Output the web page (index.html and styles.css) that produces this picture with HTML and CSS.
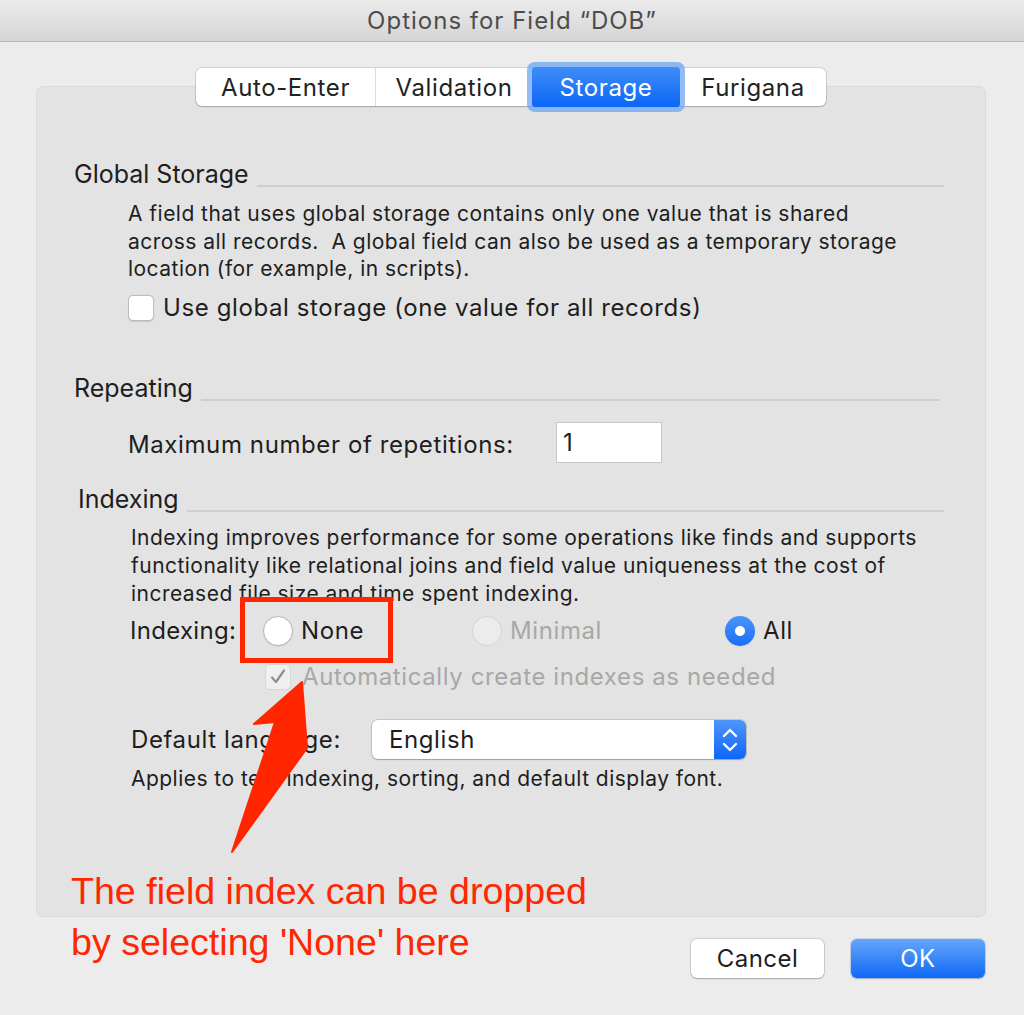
FILE: index.html
```html
<!DOCTYPE html>
<html lang="en">
<head>
<meta charset="utf-8">
<title>Options for Field “DOB”</title>
<link rel="stylesheet" href="styles.css">
</head>
<body>
<div class="window">
  <header class="titlebar">Options for Field “DOB”</header>
  <main class="content">
    <nav class="tabs">
      <span class="tab t1">Auto-Enter</span>
      <span class="tab t2">Validation</span>
      <span class="tab t3 active">Storage</span>
      <span class="tab t4">Furigana</span>
    </nav>
    <section class="panel">
      <div class="group">
        <div class="heading"><span class="htext">Global Storage</span><i class="rule"></i></div>
        <p class="desc">A field that uses global storage contains only one value that is shared<br>across all records.&nbsp; A global field can also be used as a temporary storage<br>location (for example, in scripts).</p>
        <div class="checkrow"><span class="box"></span><span class="label">Use global storage (one value for all records)</span></div>
      </div>
      <div class="group repeating">
        <div class="heading"><span class="htext">Repeating</span><i class="rule short"></i></div>
        <div class="maxrow"><span class="label maxlabel">Maximum number of repetitions:</span><span class="field">1</span></div>
      </div>
      <div class="group indexing">
        <div class="heading idxhead"><span class="htext">Indexing</span><i class="rule"></i></div>
        <p class="desc">Indexing improves performance for some operations like finds and supports<br>functionality like relational joins and field value uniqueness at the cost of<br>increased file size and time spent indexing.</p>
        <div class="radiorow">
          <span class="label idxlabel">Indexing:</span>
          <span class="radio-item r-none"><span class="radio"></span><span class="label">None</span></span>
          <span class="radio-item r-min disabled"><span class="radio"></span><span class="label">Minimal</span></span>
          <span class="radio-item r-all"><span class="radio on"></span><span class="label">All</span></span>
        </div>
        <div class="autorow">
          <span class="box dis"><svg viewBox="0 0 26 26" width="26" height="26"><path d="M7 13.5 L11 18 L19 6.5" fill="none" stroke="#8e8e8e" stroke-width="2.2" stroke-linecap="round" stroke-linejoin="round"/></svg></span>
          <span class="label gray">Automatically create indexes as needed</span>
        </div>
        <div class="langrow">
          <span class="label langlabel">Default language:</span>
          <span class="popup">
            <span class="pvalue">English</span>
            <span class="stepper"><svg viewBox="0 0 32 39" width="32" height="39"><path d="M10 16 L16 10 L22 16" fill="none" stroke="#fff" stroke-width="2.4" stroke-linecap="round" stroke-linejoin="round"/><path d="M10 24 L16 30 L22 24" fill="none" stroke="#fff" stroke-width="2.4" stroke-linecap="round" stroke-linejoin="round"/></svg></span>
          </span>
        </div>
        <p class="desc applies">Applies to text indexing, sorting, and default display font.</p>
      </div>
    </section>
    <footer class="buttons">
      <span class="btn cancel">Cancel</span>
      <span class="btn ok">OK</span>
    </footer>
  </main>
  <div class="callout-box"></div>
  <svg class="callout-arrow" viewBox="0 0 1024 1015" width="1024" height="1015">
    <path d="M302 682 L254 724 L275 722 L232 852 L307 748 Z" fill="#ff2600" stroke="#ff2600" stroke-width="2" stroke-linejoin="round"/>
  </svg>
  <p class="callout-text">The field index can be dropped<br>by selecting 'None' here</p>
</div>
</body>
</html>
```
FILE: styles.css
```css
* { box-sizing: border-box; }
html, body { margin: 0; padding: 0; }
body {
  width: 1024px;
  height: 1015px;
  overflow: hidden;
  background: #ececec;
  font-family: Inter, "Noto Sans", sans-serif;
  color: #222;
}
.window { position: relative; height: 1015px; display: flex; flex-direction: column; }
.titlebar {
  flex: none;
  height: 42px;
  background: linear-gradient(#ebebeb, #d5d5d5);
  border-bottom: 1px solid #b8b8b8;
  display: flex; align-items: center; justify-content: center;
  font-size: 24px; letter-spacing: 1px; color: #4d4d4d;
}
.content { padding: 26px 38px 0 36px; display: flex; flex-direction: column; }

.tabs {
  position: relative; z-index: 1;
  align-self: center;
  display: flex;
  width: 630px; height: 38px;
  background: #fff;
  border-radius: 6px;
  box-shadow: 0 0 0 1px rgba(0,0,0,0.11), 0 1px 1.5px rgba(0,0,0,0.18);
}
.tab {
  display: flex; align-items: center; justify-content: center;
  font-size: 24px; letter-spacing: 0.6px; color: #222;
}
.tab + .tab { border-left: 1px solid #dcdcdc; }
.t1 { width: 179px; }
.t2 { width: 157px; }
.t3 { width: 148px; }
.t4 { width: 146px; }
.tab.active {
  color: #fff;
  border-left: none;
  background: linear-gradient(#3f8dfa, #0c66f6);
  border-radius: 3px;
  margin: -1px 0;
  box-shadow: 0 0 0 5px rgba(110,165,245,0.75);
}
.tab.active + .tab { border-left: none; }

.panel {
  margin-top: -20px;
  height: 831px;
  background: #e3e3e3;
  border: 1px solid #d9d9d9;
  border-radius: 7px;
  padding: 72px 41px 0 37px;
}
.heading { display: flex; height: 30px; font-size: 25px; line-height: 30px; color: #1e1e1e; }
.rule { flex: 1; height: 2px; background: #cecece; margin: 26px 0 0 8px; }
.rule.short { margin-right: 4px; }
.desc { margin: 11px 0 0 54px; font-size: 21px; letter-spacing: 0.47px; line-height: 27.7px; color: #1e1e1e; }
.label { font-size: 24px; letter-spacing: 0.6px; line-height: 30px; color: #1e1e1e; white-space: nowrap; }
.gray { color: #a8a8a8; }

.checkrow { display: flex; align-items: center; height: 30px; margin: 10px 0 0 54px; }
.box {
  width: 26px; height: 26px; flex: none;
  background: #fff; border: 1px solid #bcbcbc; border-radius: 5px;
  box-shadow: 0 0.5px 1px rgba(0,0,0,0.12);
  margin-right: 9px;
}
.box.dis { background: #f0f0f0; border-color: #d6d6d6; box-shadow: none; margin-right: 11px; }
.box svg { display: block; margin: -1px; }

.repeating { margin-top: 50px; }
.maxrow { display: flex; align-items: center; height: 41px; margin: 19px 0 0 54px; }
.maxlabel { width: 428px; padding-top: 5px; }
.field {
  width: 106px; height: 41px;
  background: #fff; border: 1px solid #c6c6c6;
  font-size: 24px; line-height: 39px; padding-left: 6px; color: #1e1e1e;
}

.indexing { margin-top: 21px; margin-left: 3px; }
.idxhead { margin-left: 1px; }
.indexing .desc { margin-top: 10px; margin-left: 54px; }
.radiorow { display: flex; align-items: center; height: 30px; margin: 9px 0 0 53px; }
.idxlabel { width: 133px; letter-spacing: 0.3px; }
.radio-item { display: flex; align-items: center; }
.r-none { width: 209px; }
.r-min { width: 253px; }
.radio {
  width: 30px; height: 30px; flex: none; border-radius: 50%;
  background: #fff; border: 1px solid #b9b9b9;
  box-shadow: 0 0.5px 1px rgba(0,0,0,0.15);
  margin-right: 8px;
}
.disabled .radio { background: #ececec; border-color: #d4d4d4; box-shadow: none; }
.disabled .label { color: #a8a8a8; }
.radio.on {
  border: none;
  background: radial-gradient(circle, #fff 0 4.5px, transparent 5.5px), linear-gradient(#4b94fa, #1a6ff7);
}
.autorow { display: flex; align-items: center; height: 27px; margin: 17px 0 0 188px; }

.langrow { display: flex; align-items: center; height: 39px; margin: 30px 0 0 54px; }
.langlabel { width: 241px; }
.popup {
  display: flex; width: 374px; height: 39px;
  background: #fff; border-radius: 6px;
  box-shadow: 0 0 0 1px rgba(0,0,0,0.13), 0 1px 1.5px rgba(0,0,0,0.2);
}
.pvalue { flex: 1; padding-left: 17px; font-size: 24px; letter-spacing: 0.6px; line-height: 39px; color: #1e1e1e; }
.stepper {
  width: 32px; border-radius: 0 6px 6px 0;
  background: linear-gradient(#4f96fa, #0d66f6);
}
.stepper svg { display: block; }
.desc.applies { margin-top: 6px; }

.buttons { display: flex; justify-content: flex-end; gap: 27px; margin: 22px 1px 0 0; }
.btn {
  display: flex; align-items: center; justify-content: center;
  height: 39px; border-radius: 6px; font-size: 24px; letter-spacing: 0.5px;
}
.cancel {
  width: 133px; background: #fff; color: #1e1e1e;
  box-shadow: 0 0 0 1px rgba(0,0,0,0.12), 0 1px 1.5px rgba(0,0,0,0.2);
}
.ok {
  width: 134px; color: #fff;
  background: linear-gradient(#66a6fb, #0f68f6);
  box-shadow: 0 0 0 1px rgba(0,60,200,0.15), 0 1px 1.5px rgba(0,0,0,0.2);
}

.callout-box {
  position: absolute; left: 240px; top: 597px;
  width: 153px; height: 66px;
  border: 5px solid #ff2600;
}
.callout-arrow { position: absolute; left: 0; top: 0; pointer-events: none; }
.callout-text {
  position: absolute; left: 71px; top: 866px; margin: 0;
  font-family: "Liberation Sans", Arial, sans-serif;
  font-size: 37.6px; line-height: 51px; color: #ff2600;
}
```
